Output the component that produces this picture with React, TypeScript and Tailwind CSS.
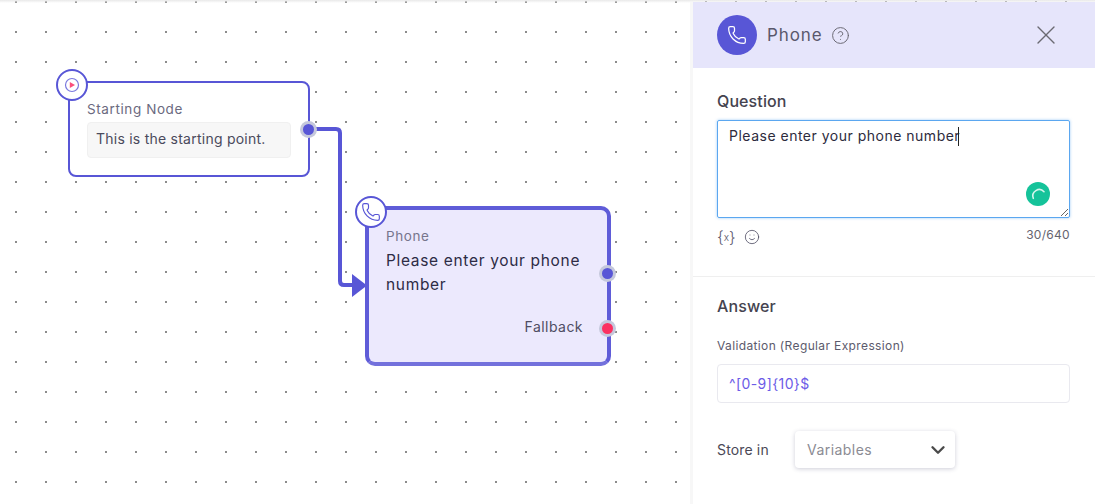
import React from 'react';
import { ChevronDown, CircleHelp, Phone, Smile, X } from 'lucide-react';

const font = 'font-["Inter","Noto_Sans",sans-serif]';

const Handle: React.FC<{ dot: string; className: string }> = ({ dot, className }) => (
  <div className={`absolute flex h-[17px] w-[17px] items-center justify-center rounded-full bg-[#c5c8dc] ${className}`}>
    <div className={`h-[11px] w-[11px] rounded-full ${dot}`} />
  </div>
);

const App: React.FC = () => {
  return (
    <div className={`relative flex h-[504px] w-[1095px] overflow-hidden bg-white bg-[radial-gradient(circle,#8c8c8c_1px,transparent_1.4px)] bg-[length:30px_30px] bg-[position:1px_-13px] ${font}`}>
      <div className="absolute inset-x-0 top-0 h-[3px] bg-gradient-to-b from-[#e9e9e9] to-transparent" />

      {/* canvas */}
      <div className="relative flex-1">
        <svg className="absolute left-0 top-0" width="690" height="504" fill="none">
          <path d="M314 129H336Q340 129 340 133V281Q340 285 344 285H354" stroke="#5856d6" strokeWidth="4" />
          <path d="M352 274L367 285.5L352 297Z" fill="#5856d6" />
        </svg>

        <div className="absolute left-[68px] top-[81px] h-[96px] w-[242px] rounded-lg border-2 border-[#5856d6] bg-white pl-[17px] pr-[17px] pt-[16px]">
          <div className="text-[13.5px] leading-[20px] tracking-[0.6px] text-[#6b6a80]">Starting Node</div>
          <div className="mt-[3px] flex h-[36px] items-center rounded border border-[#f0f0f0] bg-[#f7f7f7] pb-[3px] pl-[8px] text-[14px] tracking-[0.24px] text-[#4a4a5c]">
            This is the starting point.
          </div>
        </div>
        <div className="absolute left-[56px] top-[69px] flex h-[32px] w-[32px] items-center justify-center rounded-full border-2 border-[#5856d6] bg-white">
          <svg width="16" height="16" viewBox="0 0 16 16" fill="none">
            <circle cx="8" cy="8" r="6.5" stroke="#7a78de" strokeWidth="1.2" />
            <path d="M5.8 5L11 8L5.8 11Z" fill="#fb4f7c" />
          </svg>
        </div>
        <Handle dot="bg-[#5856d6]" className="left-[300px] top-[121px]" />

        <div className="absolute left-[365px] top-[206px] h-[160px] w-[246px] rounded-[10px] border-4 border-[#5f5cd8] border-b-[#7371dc] bg-[#ece9fd] pl-[17px] pr-[24px] pt-[16px]">
          <div className="text-[13.5px] leading-[20px] tracking-[0.6px] text-[#77758c]">Phone</div>
          <div className="mt-[3px] text-[15.5px] leading-[24px] tracking-[0.67px] text-[#2d2b45]">Please enter your phone number</div>
          <div className="mt-[20px] text-right text-[14px] leading-[20px] tracking-[0.45px] text-[#4f4d62]">Fallback</div>
        </div>
        <div className="absolute left-[355px] top-[196px] flex h-[32px] w-[32px] items-center justify-center rounded-full border-2 border-[#5856d6] bg-white">
          <Phone size={20} strokeWidth={1.4} className="text-[#5856d6]" />
        </div>
        <Handle dot="bg-[#5856d6]" className="left-[599px] top-[265px]" />
        <Handle dot="bg-[#fb3160]" className="left-[599px] top-[320px]" />
      </div>

      {/* side panel */}
      <div className="relative mt-[2px] flex w-[405px] flex-col border-l-[3px] border-[#f7f7f7] bg-white">
        <div className="flex h-[66px] shrink-0 items-center bg-[#e6e5fb] pl-[24px] pr-[33px]">
          <div className="flex h-[40px] w-[40px] items-center justify-center rounded-full bg-[#5856d6]">
            <Phone size={20} strokeWidth={1.5} className="text-white" />
          </div>
          <div className="ml-[10px] pt-[1px] text-[17px] tracking-[0.9px] text-[#5a586c]">Phone</div>
          <CircleHelp size={19} strokeWidth={1.2} className="ml-[8px] text-[#66646f]" />
          <X size={32} strokeWidth={1.05} className="ml-auto text-[#6b6a72]" />
        </div>

        <div className="flex flex-col border-b border-[#efefef] pb-[30px] pl-[24px] pr-[25px] pt-[22px]">
          <div className="text-[16px] font-medium leading-[22px] tracking-[0.1px] text-[#45434f]">Question</div>
          <div className="relative mt-[8px]">
            <textarea
              readOnly
              value="Please enter your phone number"
              className="block h-[98px] w-full resize-y rounded-[2px] border border-[#5ba7f0] px-[11px] py-[5px] text-[14px] leading-[20px] tracking-[0.5px] text-[#2d2b3d] shadow-[0_0_3px_rgba(91,167,240,0.6)] outline-none"
            />
            <div className="absolute left-[241px] top-[7px] h-[19px] w-px bg-[#222]" />
            <div className="absolute bottom-[12px] right-[20px] flex h-[24px] w-[24px] items-center justify-center rounded-full bg-[#15c39a]">
              <svg width="16" height="16" viewBox="0 0 16 16" fill="none">
                <path d="M3.3 12.3A6.4 6.4 0 0 1 14 5.7" stroke="#d5f5ec" strokeWidth="1.6" strokeLinecap="round" />
              </svg>
            </div>
          </div>
          <div className="mt-[10px] flex h-[18px] items-center">
            <span className="flex w-[18px] items-center justify-between pb-[1px] text-[16px] font-light leading-none text-[#5d5b70]">
              <span>{'{'}</span>
              <span className="text-[10px]">x</span>
              <span>{'}'}</span>
            </span>
            <Smile size={16} strokeWidth={1.2} className="ml-[9px] text-[#4d4b62]" />
            <span className="mb-[4px] ml-auto text-[12px] tracking-[0.3px] text-[#66646f]">30/640</span>
          </div>
        </div>

        <div className="flex flex-col pl-[24px] pr-[25px] pt-[18px]">
          <div className="text-[16px] font-medium leading-[22px] tracking-[0.1px] text-[#45434f]">Answer</div>
          <div className="mt-[20px] text-[12px] leading-[18px] tracking-[0.37px] text-[#5c5a6c]">Validation (Regular Expression)</div>
          <div className="mt-[9px] flex h-[39px] items-center rounded border border-[#e9e9ef] pl-[11px] text-[14px] tracking-[0.4px] text-[#6c5ce7]">
            ^[0-9]{'{10}'}$
          </div>
          <div className="mt-[28px] flex items-center">
            <div className="w-[78px] text-[14px] tracking-[0.15px] text-[#4a4856]">Store in</div>
            <div className="flex h-[37px] w-[160px] items-center justify-between rounded bg-white pl-[12px] pr-[6px] text-[14px] tracking-[0.45px] text-[#8b8b93] shadow-[0_1px_4px_rgba(60,60,100,0.25)]">
              Variables
              <ChevronDown size={22} strokeWidth={2.6} className="text-[#4a4a4a]" />
            </div>
          </div>
        </div>
      </div>
    </div>
  );
};

export default App;
